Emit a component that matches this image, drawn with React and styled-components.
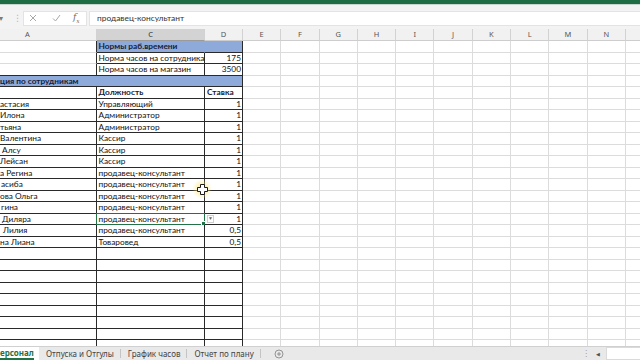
import React from "react";
import styled, { createGlobalStyle } from "styled-components";

const GRID = "97px 108px 38px repeat(11, 38.3px)";
const TAIL = ["E", "F", "G", "H", "I", "J", "K", "L", "M", "N", "O"];

const staff = [
  { name: "астасия", ind: 0, role: "Управляющий", rate: "1" },
  { name: "Илона", ind: 0, role: "Администратор", rate: "1" },
  { name: "тьяна", ind: 0, role: "Администратор", rate: "1" },
  { name: "Валентина", ind: 0, role: "Кассир", rate: "1" },
  { name: "Алсу", ind: 2, role: "Кассир", rate: "1" },
  { name: "Лейсан", ind: 0, role: "Кассир", rate: "1" },
  { name: "а Регина", ind: 0, role: "продавец-консультант", rate: "1" },
  { name: "асиба", ind: 1, role: "продавец-консультант", rate: "1" },
  { name: "ова Ольга", ind: 0, role: "продавец-консультант", rate: "1" },
  { name: "гина", ind: 1, role: "продавец-консультант", rate: "1" },
  { name: "Диляра", ind: 2, role: "продавец-консультант", rate: "1", active: true },
  { name: "Лилия", ind: 3, role: "продавец-консультант", rate: "0,5" },
  { name: "на Лиана", ind: 0, role: "Товаровед", rate: "0,5" },
];

const GlobalStyle = createGlobalStyle`
  html, body {
    margin: 0;
    padding: 0;
    width: 640px;
    height: 360px;
    overflow: hidden;
    background: #ffffff;
  }
  #root {
    height: 360px;
  }
`;

const edge = (kind) =>
  kind === "dark" ? "#2a2a2a" : kind === "none" ? "transparent" : "#dcdcdc";

const Window = styled.div`
  display: flex;
  flex-direction: column;
  height: 360px;
  font-family: "Lato", "Liberation Sans", sans-serif;
  color: #111111;
`;

const RibbonEdge = styled.div`
  height: 4px;
  background: #1f6e43;
  border-bottom: 1px solid #c9d6ce;
`;

const FormulaBar = styled.div`
  height: 24px;
  box-sizing: border-box;
  padding-top: 2px;
  display: flex;
  align-items: center;
  background: #f3f3f3;
`;

const NameTail = styled.span`
  width: 14px;
  margin-left: -1px;
  font-size: 8px;
  color: #7a7a7a;
`;

const Grip = styled.span`
  width: 10px;
  font-family: "DejaVu Sans", sans-serif;
  font-size: 9px;
  color: #b8b8b8;
`;

const FxBox = styled.div`
  width: 64px;
  height: 15px;
  box-sizing: border-box;
  display: flex;
  align-items: center;
  background: #ffffff;
  border: 1px solid #e3e3e3;
  padding-left: 5px;
`;

const ToolGlyph = styled.span`
  display: flex;
  margin-right: ${(p) => p.$gap}px;
`;

const Fx = styled.span`
  font-family: "DejaVu Serif", serif;
  font-style: italic;
  font-size: 9px;
  color: #6e6e6e;
  sub {
    font-size: 6px;
  }
`;

const FormulaInput = styled.div`
  flex: 1;
  height: 15px;
  margin-left: 2px;
  box-sizing: border-box;
  padding-left: 7px;
  display: flex;
  align-items: center;
  background: #ffffff;
  border: 1px solid #e3e3e3;
  border-right: none;
  font-size: 8.4px;
  color: #333333;
`;

const Sheet = styled.div`
  position: relative;
  flex: 1;
  overflow: hidden;
  background: #ffffff;
`;

const HeadRow = styled.div`
  display: grid;
  grid-template-columns: ${GRID};
  height: 12px;
`;

const HeadCell = styled.div`
  box-sizing: border-box;
  padding-left: ${(p) => p.$pad || 0}px;
  text-align: ${(p) => (p.$pad ? "left" : "center")};
  font-family: "Noto Sans", "Open Sans", sans-serif;
  font-size: 7.5px;
  line-height: 11px;
  color: ${(p) => (p.$selected ? "#303030" : "#555555")};
  background: ${(p) => (p.$selected ? "#d3d3d3" : "#f1f1f1")};
  border-right: 1px solid #d2d2d2;
  border-bottom: 1px solid ${(p) => (p.$selected ? "#9a9a9a" : "#cdcdcd")};
`;

const Row = styled.div`
  display: grid;
  grid-template-columns: ${GRID};
  height: 11.5px;
`;

const Cell = styled.div`
  position: relative;
  box-sizing: border-box;
  height: 11.5px;
  padding: 0 1px 0 ${(p) => p.$ind ?? 2}px;
  grid-column: ${(p) => (p.$span ? `span ${p.$span}` : "auto")};
  font-size: 8.3px;
  line-height: 11px;
  white-space: pre;
  overflow: ${(p) => (p.$active ? "visible" : "hidden")};
  text-align: ${(p) => (p.$right ? "right" : "left")};
  font-weight: ${(p) => (p.$bold ? 700 : 400)};
  color: ${(p) => (p.$bold ? "#15213a" : "#111111")};
  background: ${(p) => (p.$fill ? "#8eaadb" : "transparent")};
  border-right: 1px solid ${(p) => edge(p.$r)};
  border-bottom: 1px solid ${(p) => edge(p.$b)};
`;

const Selection = styled.div`
  position: absolute;
  inset: -1px -1px -1px -1px;
  border: 1px solid #217346;
  pointer-events: none;
`;

const FillHandle = styled.div`
  position: absolute;
  right: -2px;
  bottom: -2px;
  width: 3px;
  height: 3px;
  background: #217346;
  border: 1px solid #ffffff;
`;

const DropButton = styled.div`
  position: absolute;
  top: 1px;
  right: -10px;
  width: 7px;
  height: 8px;
  box-sizing: border-box;
  display: flex;
  align-items: center;
  justify-content: center;
  background: #ffffff;
  border: 1px solid #cfcfcf;
  font-size: 5px;
  color: #666666;
  z-index: 2;
`;

const Cursor = styled.div`
  position: absolute;
  left: 192px;
  top: 150px;
  width: 20px;
  height: 20px;
  display: flex;
  align-items: center;
  justify-content: center;
  border-radius: 50%;
  background: radial-gradient(circle, rgba(255, 221, 90, 0.75) 0%, rgba(255, 230, 120, 0.35) 45%, rgba(255, 240, 160, 0) 70%);
  pointer-events: none;
`;

const TabBar = styled.div`
  height: 14px;
  box-sizing: border-box;
  display: flex;
  align-items: stretch;
  background: #e9e9e9;
  border-top: 1px solid #d0d0d0;
  font-family: "Noto Sans", "Open Sans", sans-serif;
  font-size: 8px;
`;

const ActiveTab = styled.div`
  width: 39px;
  display: flex;
  align-items: center;
  background: #ffffff;
  color: #217346;
  font-weight: 700;
  span {
    line-height: 10px;
    border-bottom: 2px solid #217346;
  }
`;

const Tab = styled.div`
  display: flex;
  align-items: center;
  padding: 0 7px 0 4px;
  margin-left: 3px;
  color: #444444;
  position: relative;
  &::after {
    content: "";
    position: absolute;
    right: 0;
    top: 2px;
    bottom: 2px;
    border-right: 1px solid #c4c4c4;
  }
`;

const AddSheet = styled.div`
  margin-left: 13px;
  display: flex;
  align-items: center;
`;

const ScrollArea = styled.div`
  margin-left: auto;
  display: flex;
  align-items: center;
  gap: 6px;
`;

const Dots = styled.span`
  font-family: "DejaVu Sans", sans-serif;
  font-size: 8px;
  color: #9a9a9a;
`;

const ScrollArrow = styled.span`
  font-size: 5px;
  color: #505050;
`;

const ScrollTrack = styled.div`
  width: 33px;
  height: 11px;
  background: #ffffff;
  border: 1px solid #dadada;
  border-right: none;
`;

function Tail({ bottom = "light" }) {
  return TAIL.map((c) => <Cell key={c} $r="light" $b={bottom} />);
}

function TableRow({ a, aInd, c, d, active }) {
  return (
    <Row>
      <Cell $ind={aInd} $r="dark" $b="dark">{a}</Cell>
      <Cell $ind={1.5} $r="dark" $b="dark" $active={active}>
        {c}
        {active && (
          <>
            <Selection>
              <FillHandle />
            </Selection>
            <DropButton>▼</DropButton>
          </>
        )}
      </Cell>
      <Cell $right $r="dark" $b="dark">{d}</Cell>
      <Tail />
    </Row>
  );
}

export default function App() {
  const emptyRows = Array.from({ length: 10 }, (_, i) => i);
  return (
    <Window>
      <GlobalStyle />
      <RibbonEdge />

      <FormulaBar>
        <NameTail>▾</NameTail>
        <Grip>⋮</Grip>
        <FxBox>
          <ToolGlyph $gap={15}>
            <svg width="8" height="8" viewBox="0 0 8 8">
              <path d="M1 1 L7 7 M7 1 L1 7" stroke="#a8a8a8" strokeWidth="1" fill="none" />
            </svg>
          </ToolGlyph>
          <ToolGlyph $gap={12}>
            <svg width="9" height="8" viewBox="0 0 9 8">
              <path d="M1 4.5 L3.5 7 L8 1" stroke="#a8a8a8" strokeWidth="1" fill="none" />
            </svg>
          </ToolGlyph>
          <Fx>
            f<sub>x</sub>
          </Fx>
        </FxBox>
        <FormulaInput>продавец-консультант</FormulaInput>
      </FormulaBar>

      <Sheet>
        <HeadRow>
          <HeadCell $pad={25}>A</HeadCell>
          <HeadCell $selected>C</HeadCell>
          <HeadCell>D</HeadCell>
          {TAIL.map((c) => (
            <HeadCell key={c}>{c === "O" ? "" : c}</HeadCell>
          ))}
        </HeadRow>

        <Row>
          <Cell $r="dark" $b="light" />
          <Cell $ind={1.5} $bold $fill $r="none" $b="dark">Нормы раб.времени</Cell>
          <Cell $fill $r="dark" $b="dark" />
          <Tail />
        </Row>
        <Row>
          <Cell $r="dark" $b="light" />
          <Cell $ind={1.5} $r="dark" $b="dark">Норма часов на сотрудника</Cell>
          <Cell $right $r="dark" $b="dark">175</Cell>
          <Tail />
        </Row>
        <Row>
          <Cell $r="dark" $b="dark" />
          <Cell $ind={1.5} $r="dark" $b="dark">Норма часов на магазин</Cell>
          <Cell $right $r="dark" $b="dark">3500</Cell>
          <Tail />
        </Row>
        <Row>
          <Cell $span={3} $ind={0} $bold $fill $r="dark" $b="dark">
            ция по сотрудникам
          </Cell>
          <Tail />
        </Row>
        <Row>
          <Cell $r="dark" $b="dark" />
          <Cell $ind={1.5} $bold $r="dark" $b="dark">Должность</Cell>
          <Cell $bold $r="dark" $b="dark">Ставка</Cell>
          <Tail />
        </Row>

        {staff.map((s) => (
          <TableRow key={s.name} a={s.name} aInd={s.ind} c={s.role} d={s.rate} active={s.active} />
        ))}
        {emptyRows.map((i) => (
          <TableRow key={i} />
        ))}

        <Cursor>
          <svg width="11" height="11" viewBox="0 0 11 11">
            <path
              d="M3.5 0.5 H7.5 V3.5 H10.5 V7.5 H7.5 V10.5 H3.5 V7.5 H0.5 V3.5 H3.5 Z"
              fill="#ffffff"
              stroke="#1a1a1a"
              strokeWidth="1"
            />
          </svg>
        </Cursor>
      </Sheet>

      <TabBar>
        <ActiveTab>
          <span>ерсонал</span>
        </ActiveTab>
        <Tab>Отпуска и Отгулы</Tab>
        <Tab>График часов</Tab>
        <Tab>Отчет по плану</Tab>
        <AddSheet>
          <svg width="10" height="10" viewBox="0 0 10 10">
            <circle cx="5" cy="5" r="4" stroke="#8a8a8a" strokeWidth="0.9" fill="none" />
            <path d="M5 3 V7 M3 5 H7" stroke="#8a8a8a" strokeWidth="0.9" />
          </svg>
        </AddSheet>
        <ScrollArea>
          <Dots>⋮</Dots>
          <ScrollArrow>◀</ScrollArrow>
          <ScrollTrack />
        </ScrollArea>
      </TabBar>
    </Window>
  );
}
